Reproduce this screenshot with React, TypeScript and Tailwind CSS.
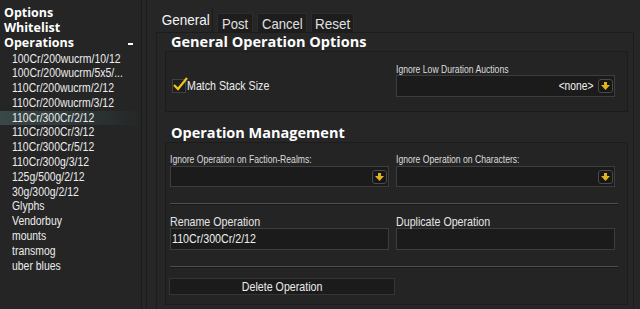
import React from "react";

const items = [
  "100Cr/200wucrm/10/12",
  "100Cr/200wucrm/5x5/...",
  "110Cr/200wucrm/2/12",
  "110Cr/200wucrm/3/12",
  "110Cr/300Cr/2/12",
  "110Cr/300Cr/3/12",
  "110Cr/300Cr/5/12",
  "110Cr/300g/3/12",
  "125g/500g/2/12",
  "30g/300g/2/12",
  "Glyphs",
  "Vendorbuy",
  "mounts",
  "transmog",
  "uber blues",
];

function L({ children }: { children: React.ReactNode }) {
  return <span className="inline-block whitespace-nowrap origin-left scale-x-[0.82]">{children}</span>;
}

function DropBtn() {
  return (
    <div className="w-[15px] h-[14px] rounded-[3px] bg-[#171717] border border-[#4a4a4a] flex items-center justify-center shrink-0">
      <svg width="9" height="8" viewBox="0 0 9 8">
        <path d="M3 0h3v3h3L4.5 8 0 3h3z" fill="#e2b21d" />
      </svg>
    </div>
  );
}

function Dropdown({ value, h }: { value?: string; h: string }) {
  return (
    <div className={h + " bg-[#1b1b1b] border border-[#3d3d3d] flex items-center justify-end pr-[1px]"}>
      {value && (
        <span className="inline-block whitespace-nowrap origin-right scale-x-[0.82] text-[12.5px] text-[#f0f0f0] mr-[5px]">
          {value}
        </span>
      )}
      <DropBtn />
    </div>
  );
}

function Separator() {
  return <div className="w-[448px] h-[2px] border-t border-[#4e4e4e] bg-[#1a1a1a]" />;
}

export default function App() {
  return (
    <div className="w-[640px] h-[309px] bg-[#262626] flex overflow-hidden font-['Liberation_Sans',sans-serif] text-[#e8e8e8]">
      {/* Left tree */}
      <div className="w-[142px] h-full shrink-0 border-r border-[#1a1a1a] bg-[#252525] pt-[5px]">
        <div className="h-[15px] leading-[15px] pl-[4px] text-[12.5px] font-bold font-['Open_Sans',sans-serif] text-white">
          Options
        </div>
        <div className="h-[15px] leading-[15px] pl-[4px] text-[12.5px] font-bold font-['Open_Sans',sans-serif] text-white">
          Whitelist
        </div>
        <div className="h-[15px] leading-[15px] pl-[4px] pr-[8px] flex items-center justify-between text-[12.5px] font-bold font-['Open_Sans',sans-serif] text-white">
          <span>Operations</span>
          <span className="w-[5px] h-[2px] bg-white mt-[3px]" />
        </div>
        <div className="pt-[1.5px]">
          {items.map((t, i) => (
            <div
              key={t}
              className={
                i === 4
                  ? "h-[14.8px] leading-[14.8px] pl-[12px] text-[12px] text-[#ececec] bg-linear-to-r from-[#3a4848] via-[#2f3a3a] to-transparent"
                  : "h-[14.8px] leading-[14.8px] pl-[12px] text-[12px] text-[#ececec]"
              }
            >
              <span className="inline-block whitespace-nowrap origin-left scale-x-[0.87]">{t}</span>
            </div>
          ))}
        </div>
      </div>

      {/* Main */}
      <div className="ml-[4px] border-l border-[#1b1b1b] flex-1 pl-[9px] pr-[6px] flex flex-col">
        {/* Tabs */}
        <div className="h-[32px] pt-[7px] pl-[4px] flex items-end gap-[4px] shrink-0">
          <div className="w-[53px] h-[25px] border-r border-[#1c1c1c] flex justify-center pt-[4px] text-[15px] leading-[18px] text-[#f4f4f4]">
            <span className="inline-block whitespace-nowrap origin-center scale-x-[0.9]">General</span>
          </div>
          <div className="w-[36px] h-[19px] bg-[#1d1d1d] border border-b-0 border-[#2c2c2c] flex justify-center text-[15px] leading-[19px] text-[#e0e0e0]">
            <span className="inline-block whitespace-nowrap origin-center scale-x-[0.87]">Post</span>
          </div>
          <div className="w-[50px] h-[19px] bg-[#1d1d1d] border border-b-0 border-[#2c2c2c] flex justify-center text-[15px] leading-[19px] text-[#e0e0e0]">
            <span className="inline-block whitespace-nowrap origin-center scale-x-[0.87]">Cancel</span>
          </div>
          <div className="w-[43px] h-[19px] bg-[#1d1d1d] border border-b-0 border-[#2c2c2c] flex justify-center text-[15px] leading-[19px] text-[#e0e0e0]">
            <span className="inline-block whitespace-nowrap origin-center scale-x-[0.9]">Reset</span>
          </div>
        </div>

        {/* Frame */}
        <div className="flex-1 border border-b-0 border-[#1c1c1c] pl-[8px] pr-[5px] flex flex-col">
          <div className="h-[18px] pl-[6px] leading-[18px] text-[14.5px] font-bold font-['Open_Sans',sans-serif] text-white whitespace-nowrap">
            General Operation Options
          </div>
          <div className="h-[61px] border border-[#1c1c1c] bg-[#242424] pl-[4px] pt-[11px] grid grid-cols-[219px_219px] gap-x-[7px]">
            <div className="pt-[12px]">
              <div className="h-[22px] flex items-center pl-[2px]">
                <div className="relative w-[14px] h-[14px] bg-[#1e1e1e] border border-[#404040] shrink-0">
                  <svg className="absolute left-[-1px] top-[-3px]" width="17" height="15" viewBox="0 0 17 15">
                    <path d="M2 8 L6 12 L15 1" fill="none" stroke="#f0c31a" strokeWidth="2.2" />
                  </svg>
                </div>
                <span className="ml-[1px] text-[13px] text-[#ececec]">
                  <L>Match Stack Size</L>
                </span>
              </div>
            </div>
            <div>
              <div className="h-[12px] leading-[12px] text-[10.5px] text-[#dcdcdc]">
                <L>Ignore Low Duration Auctions</L>
              </div>
              <Dropdown value="<none>" h="h-[22px]" />
            </div>
          </div>

          <div className="mt-[12px] h-[18px] pl-[6px] leading-[18px] text-[14.5px] font-bold font-['Open_Sans',sans-serif] text-white whitespace-nowrap">
            Operation Management
          </div>
          <div className="border border-[#1c1c1c] bg-[#242424] pl-[4px] pt-[10px] pb-[9px] flex flex-col">
            <div className="grid grid-cols-[219px_219px] gap-x-[7px]">
              <div>
                <div className="h-[13px] leading-[13px] text-[10.5px] text-[#dcdcdc]">
                  <L>Ignore Operation on Faction-Realms:</L>
                </div>
                <Dropdown h="h-[21px]" />
              </div>
              <div>
                <div className="h-[13px] leading-[13px] text-[10.5px] text-[#dcdcdc]">
                  <L>Ignore Operation on Characters:</L>
                </div>
                <Dropdown h="h-[21px]" />
              </div>
            </div>
            <div className="mt-[16px]">
              <Separator />
            </div>
            <div className="mt-[10px] grid grid-cols-[219px_219px] gap-x-[7px]">
              <div>
                <div className="h-[13px] leading-[13px] text-[13px] text-[#e4e4e4]">
                  <L>Rename Operation</L>
                </div>
                <div className="h-[22px] bg-[#1b1b1b] border border-[#3d3d3d] flex items-center pl-[1px] text-[13px] text-[#f0f0f0]">
                  <L>110Cr/300Cr/2/12</L>
                </div>
              </div>
              <div>
                <div className="h-[13px] leading-[13px] text-[13px] text-[#e4e4e4]">
                  <L>Duplicate Operation</L>
                </div>
                <div className="h-[22px] bg-[#1b1b1b] border border-[#3d3d3d]" />
              </div>
            </div>
            <div className="mt-[16px]">
              <Separator />
            </div>
            <div className="mt-[10px] -ml-[1px] w-[226px] h-[17px] bg-[#1b1b1b] border border-[#353535] flex items-center justify-center text-[13px] text-[#ececec]">
              <span className="inline-block whitespace-nowrap origin-center scale-x-[0.82]">Delete Operation</span>
            </div>
          </div>
        </div>
      </div>
    </div>
  );
}
